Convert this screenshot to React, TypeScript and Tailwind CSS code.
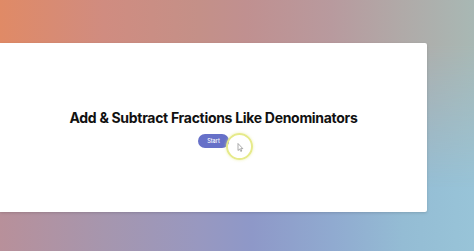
export default function App() {
  return (
    <div className="grid h-[251px] w-[474px] overflow-hidden font-['Inter','Liberation_Sans',sans-serif]">
      {/* bottom colours */}
      <div className="[grid-area:1/1] bg-[linear-gradient(to_right,#b8909a_0%,#a696ae_22%,#9898c0_42%,#8e98c8_53%,#90aad0_70%,#94bcd4_85%,#98c4d8_100%)]" />
      {/* top colours, faded downwards */}
      <div className="[grid-area:1/1] bg-[linear-gradient(to_right,#e08a66_0%,#d08c80_22%,#c49088_42%,#c09090_52%,#b89a9e_70%,#b0aaa8_85%,#a8b8b4_100%)] [mask-image:linear-gradient(to_bottom,black_0%,black_18%,transparent_75%)]" />
      <div className="[grid-area:1/1] z-10 pt-[43px]">
        <div className="flex h-[169px] w-[427px] flex-col items-center justify-center rounded-r-[2px] bg-white shadow-[0_1px_3px_rgba(0,0,0,0.15)]">
          <h1 className="mt-[2px] text-[14px] font-bold leading-[18px] tracking-[-0.3px] text-[#111]">
            Add &amp; Subtract Fractions Like Denominators
          </h1>
          <div className="relative mt-[7px]">
            <button className="flex h-[14px] w-[31px] items-center justify-center rounded-full bg-[#6670c8] text-[5.5px] font-medium text-white">
              Start
            </button>
            {/* click highlight around the cursor */}
            <div className="absolute left-[28px] top-[-1px] flex h-[27px] w-[27px] items-center justify-center rounded-full border-2 border-[#e6ea8a] shadow-[0_0_3px_rgba(230,234,138,0.7)]">
              <svg width="7" height="9" viewBox="0 0 7 9" className="ml-[1px] mt-[2px]">
                <path d="M1 0.5 L1 7.5 L2.6 6 L3.8 8.5 L4.8 8 L3.7 5.6 L5.8 5.6 Z" fill="#fff" stroke="#888" strokeWidth="0.7" />
              </svg>
            </div>
          </div>
        </div>
      </div>
    </div>
  );
}
